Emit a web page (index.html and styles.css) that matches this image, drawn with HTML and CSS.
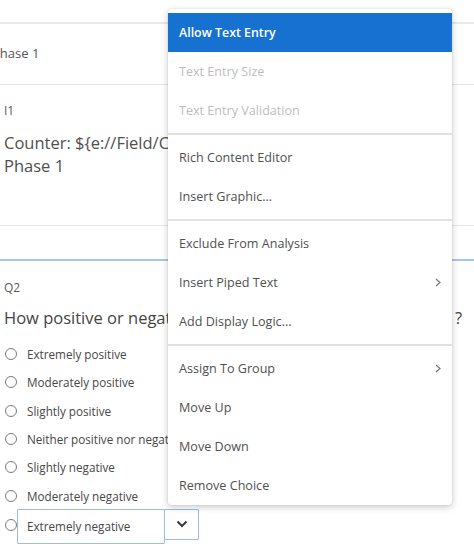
FILE: index.html
```html
<!DOCTYPE html>
<html>
<head>
<meta charset="utf-8">
<link rel="stylesheet" href="styles.css">
</head>
<body>
<div class="page">
  <div class="topbar"></div>
  <div class="block block-phase">
    <span class="phase-title">Phase 1</span>
  </div>
  <div class="block block-counter">
    <div class="qid">I1</div>
    <div class="qtext counter">Counter: ${e://Field/Counter}<br>Phase 1</div>
  </div>
  <div class="spacer"></div>
  <div class="block block-q2">
    <div class="qid">Q2</div>
    <div class="qtext question"><span class="question-main">How positive or negative do you feel about Phase 1 overall</span><span>?</span></div>
    <ul class="choices">
      <li class="choice"><span class="radio"></span><span class="label">Extremely positive</span></li>
      <li class="choice"><span class="radio"></span><span class="label">Moderately positive</span></li>
      <li class="choice"><span class="radio"></span><span class="label">Slightly positive</span></li>
      <li class="choice"><span class="radio"></span><span class="label">Neither positive nor negative</span></li>
      <li class="choice"><span class="radio"></span><span class="label">Slightly negative</span></li>
      <li class="choice"><span class="radio"></span><span class="label">Moderately negative</span></li>
      <li class="choice choice-edit"><span class="radio"></span><span class="edit-box">Extremely negative</span><span class="edit-toggle"><svg width="12" height="8" viewBox="0 0 12 8"><polyline points="1.5,1.5 6,6 10.5,1.5" fill="none" stroke="#3a3a3a" stroke-width="2"/></svg></span></li>
    </ul>
  </div>

  <div class="menu">
    <div class="menu-item active">Allow Text Entry</div>
    <div class="menu-item disabled">Text Entry Size</div>
    <div class="menu-item disabled">Text Entry Validation</div>
    <div class="menu-sep"></div>
    <div class="menu-item">Rich Content Editor</div>
    <div class="menu-item">Insert Graphic...</div>
    <div class="menu-sep"></div>
    <div class="menu-item">Exclude From Analysis</div>
    <div class="menu-item has-sub">Insert Piped Text<svg class="sub-arrow" width="6" height="9" viewBox="0 0 6 9"><polyline points="1,1 5,4.5 1,8" fill="none" stroke="#777" stroke-width="1.2"/></svg></div>
    <div class="menu-item">Add Display Logic...</div>
    <div class="menu-sep"></div>
    <div class="menu-item has-sub">Assign To Group<svg class="sub-arrow" width="6" height="9" viewBox="0 0 6 9"><polyline points="1,1 5,4.5 1,8" fill="none" stroke="#777" stroke-width="1.2"/></svg></div>
    <div class="menu-item">Move Up</div>
    <div class="menu-item">Move Down</div>
    <div class="menu-item">Remove Choice</div>
  </div>
</div>
</body>
</html>
```
FILE: styles.css
```css
html, body {
  margin: 0;
  padding: 0;
  background: #ffffff;
}
body {
  font-family: "Open Sans", "Noto Sans", sans-serif;
  color: #555555;
  width: 474px;
  height: 548px;
  overflow: hidden;
}
.page {
  position: relative;
  width: 474px;
  height: 548px;
  overflow: hidden;
}
.topbar {
  height: 22px;
  border-bottom: 2px solid #e9e9e9;
}
.block {
  padding-left: 4px;
}
.block-phase {
  border-bottom: 1px solid #e4e4e4;
  padding-left: 0;
  padding-top: 20px;
  box-sizing: border-box;
  height: 61px;
}
.phase-title {
  display: block;
  margin-left: -8px;
  font-size: 13px;
  line-height: 18px;
  color: #555;
}
.block-counter {
  height: 141px;
  box-sizing: border-box;
  padding-top: 18px;
  border-bottom: 1px solid #e4e4e4;
}
.qid {
  font-size: 12px;
  line-height: 16px;
  color: #5a5a5a;
}
.qtext {
  font-size: 16.5px;
  line-height: 23px;
  color: #4f4f4f;
  white-space: nowrap;
}
.counter {
  margin-top: 12px;
}
.spacer {
  height: 33px;
  border-bottom: 2px solid #a9c5ea;
}
.block-q2 {
  padding-top: 19px;
}
.question {
  display: flex;
  margin-top: 10px;
  line-height: 24px;
  padding-right: 12px;
  color: #444;
}
.question-main {
  flex: 1;
  overflow: hidden;
  margin-right: 6px;
}
.choices {
  list-style: none;
  margin: 10px 0 0;
  padding: 0;
}
.choice {
  display: flex;
  align-items: center;
  height: 28.3px;
  font-size: 11.7px;
  color: #474747;
  white-space: nowrap;
}
.radio {
  width: 12px;
  height: 12px;
  box-sizing: border-box;
  border: 1px solid #7a7a7a;
  border-radius: 50%;
  margin-left: 1px;
  flex: none;
}
.label {
  margin-left: 10px;
}
.choice-edit {
  align-items: flex-start;
  height: 36px;
}
.choice-edit .radio {
  margin-top: 9px;
}
.edit-box {
  margin-top: -1px;
  width: 148px;
  height: 35px;
  box-sizing: border-box;
  border: 1px solid #9cbbe4;
  padding-left: 9px;
  line-height: 33px;
  background: #fff;
  border-radius: 1px;
}
.edit-toggle {
  margin-top: -1px;
  margin-left: -1px;
  width: 35px;
  height: 31px;
  box-sizing: border-box;
  border: 1px solid #9cbbe4;
  display: flex;
  align-items: center;
  justify-content: center;
  border-radius: 1px;
}
.edit-toggle svg {
  display: block;
}

.menu {
  position: absolute;
  top: 9px;
  left: 168px;
  width: 284px;
  padding-top: 4px;
  background: #fff;
  border-radius: 3px;
  box-shadow: 0 2px 7px rgba(0, 0, 0, 0.22), 0 0 1px rgba(0, 0, 0, 0.25);
}
.menu-item {
  height: 39px;
  display: flex;
  align-items: center;
  justify-content: space-between;
  padding: 0 11px;
  font-size: 12.6px;
  color: #505050;
}
.menu-item.active {
  background: #1671d0;
  color: #fff;
  font-weight: 600;
  font-size: 12.4px;
}
.menu-item.disabled {
  color: #bdbdbd;
}
.sub-arrow {
  display: block;
}
.menu-sep {
  height: 2px;
  margin: 3px 0;
  background: #e0e0e0;
}
```
